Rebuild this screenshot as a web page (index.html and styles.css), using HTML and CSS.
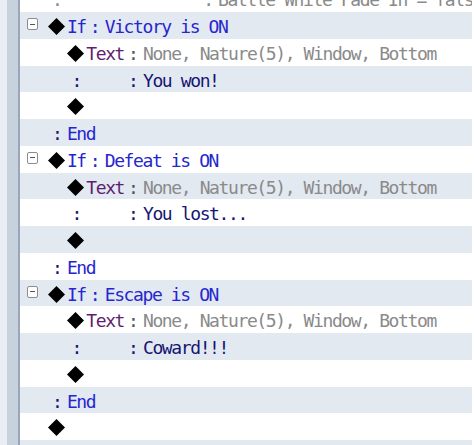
FILE: index.html
```html
<!DOCTYPE html>
<html>
<head>
<meta charset="utf-8">
<link rel="stylesheet" href="styles.css">
</head>
<body>
<div class="frame">
  <div class="gutter"><div class="g1"></div><div class="g2"></div><div class="g3"></div></div>
  <div class="list">
    <div class="row l1"><span class="fw c-gray">:</span><span class="c-gray">              </span><span class="fw c-gray">:</span><span class="c-gray">Battle White Fade In = false</span></div>

    <div class="row alt tg"><span class="toggle"></span><span class="dia"><svg width="19" height="17" viewBox="0 0 19 17"><polygon points="8.5,0 17,8.5 8.5,17 0,8.5"/></svg></span><span class="c-blue">If</span><span class="fw c-blue">:</span><span class="c-blue">Victory is ON</span></div>
    <div class="row l2"><span class="dia"><svg width="19" height="17" viewBox="0 0 19 17"><polygon points="8.5,0 17,8.5 8.5,17 0,8.5"/></svg></span><span class="c-purple">Text</span><span class="fw c-dark">:</span><span class="c-gray">None, Nature(5), Window, Bottom</span></div>
    <div class="row alt l2"><span class="fw c-navy">:</span><span>    </span><span class="fw c-navy">:</span><span class="c-navy">You won!</span></div>
    <div class="row l2"><span class="dia"><svg width="19" height="17" viewBox="0 0 19 17"><polygon points="8.5,0 17,8.5 8.5,17 0,8.5"/></svg></span></div>
    <div class="row alt l1"><span class="fw c-navy">:</span><span class="c-blue">End</span></div>

    <div class="row tg"><span class="toggle"></span><span class="dia"><svg width="19" height="17" viewBox="0 0 19 17"><polygon points="8.5,0 17,8.5 8.5,17 0,8.5"/></svg></span><span class="c-blue">If</span><span class="fw c-blue">:</span><span class="c-blue">Defeat is ON</span></div>
    <div class="row alt l2"><span class="dia"><svg width="19" height="17" viewBox="0 0 19 17"><polygon points="8.5,0 17,8.5 8.5,17 0,8.5"/></svg></span><span class="c-purple">Text</span><span class="fw c-dark">:</span><span class="c-gray">None, Nature(5), Window, Bottom</span></div>
    <div class="row l2"><span class="fw c-navy">:</span><span>    </span><span class="fw c-navy">:</span><span class="c-navy">You lost...</span></div>
    <div class="row alt l2"><span class="dia"><svg width="19" height="17" viewBox="0 0 19 17"><polygon points="8.5,0 17,8.5 8.5,17 0,8.5"/></svg></span></div>
    <div class="row l1"><span class="fw c-navy">:</span><span class="c-blue">End</span></div>

    <div class="row alt tg"><span class="toggle"></span><span class="dia"><svg width="19" height="17" viewBox="0 0 19 17"><polygon points="8.5,0 17,8.5 8.5,17 0,8.5"/></svg></span><span class="c-blue">If</span><span class="fw c-blue">:</span><span class="c-blue">Escape is ON</span></div>
    <div class="row l2"><span class="dia"><svg width="19" height="17" viewBox="0 0 19 17"><polygon points="8.5,0 17,8.5 8.5,17 0,8.5"/></svg></span><span class="c-purple">Text</span><span class="fw c-dark">:</span><span class="c-gray">None, Nature(5), Window, Bottom</span></div>
    <div class="row alt l2"><span class="fw c-navy">:</span><span>    </span><span class="fw c-navy">:</span><span class="c-navy">Coward!!!</span></div>
    <div class="row l2"><span class="dia"><svg width="19" height="17" viewBox="0 0 19 17"><polygon points="8.5,0 17,8.5 8.5,17 0,8.5"/></svg></span></div>
    <div class="row alt l1"><span class="fw c-navy">:</span><span class="c-blue">End</span></div>

    <div class="row l1"><span class="dia"><svg width="19" height="17" viewBox="0 0 19 17"><polygon points="8.5,0 17,8.5 8.5,17 0,8.5"/></svg></span></div>
    <div class="row alt l1"></div>
  </div>
</div>
</body>
</html>
```

FILE: styles.css
```css
html, body {
  margin: 0;
  padding: 0;
  background: #ffffff;
  overflow: hidden;
}

.frame {
  display: flex;
  width: 474px;
  height: 445px;
  overflow: hidden;
}

.gutter {
  display: flex;
  flex: 0 0 20px;
}
.g1 { width: 7px; background: #eaeef4; }
.g2 { width: 11px; background: #c8d2df; }
.g3 { width: 2px; background: #98a6b8; }

.list {
  width: 452px;
  margin-top: -14.75px;
  font-family: "DejaVu Sans Mono", monospace;
  font-size: 18px;
  letter-spacing: -1.39px;
  color: #151570;
}

.row {
  box-sizing: border-box;
  height: 26.75px;
  line-height: 23.5px;
  padding-top: 3px;
  overflow: hidden;
  white-space: pre;
  background: #ffffff;
}
.row.alt { background: #e3e9f1; }

.l1 { padding-left: 28px; }
.l2 { padding-left: 47.4px; }
.tg { padding-left: 7px; }

.toggle {
  display: inline-block;
  box-sizing: border-box;
  width: 11px;
  height: 12px;
  margin-right: 10px;
  border: 1px solid #8c8c8c;
  border-radius: 2px;
  vertical-align: 3px;
  background: linear-gradient(#555, #555) center / 5px 1px no-repeat #ffffff;
}

.dia {
  display: inline-block;
  width: 18.9px;
  letter-spacing: 0;
  vertical-align: -2px;
  line-height: 0;
}
.dia svg { display: block; fill: #000000; }

.fw {
  display: inline-block;
  width: 18.9px;
  text-align: center;
  letter-spacing: 0;
}

.c-blue { color: #2626cf; }
.c-purple { color: #5e1f72; }
.c-gray { color: #8a8a8a; }
.c-dark { color: #555555; }
.c-navy { color: #161672; }
```
